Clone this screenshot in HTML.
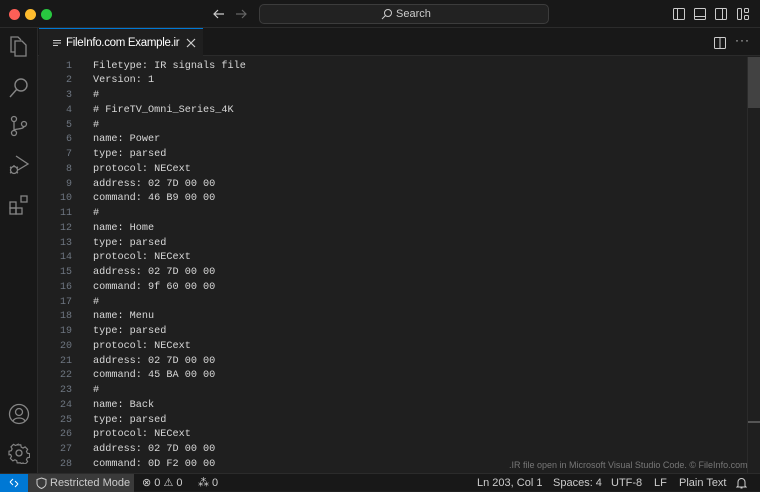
<!DOCTYPE html>
<html><head><meta charset="utf-8"><style>
*{margin:0;padding:0;box-sizing:border-box}
body{width:760px;height:491px;background:#1f1f1f;position:relative;overflow:hidden;font-family:"Liberation Sans",sans-serif;border-radius:10px}
.abs{position:absolute}
#title{left:0;top:0;width:760px;height:28px;background:#181818;border-bottom:1px solid #2b2b2b}
#act{left:0;top:28px;width:38px;height:445px;background:#181818;border-right:1px solid #2b2b2b}
#tabs{left:38px;top:28px;width:722px;height:28px;background:#181818;border-bottom:1px solid #2b2b2b}
#tab{left:39px;top:28px;width:164px;height:29px;background:#1f1f1f;border-top:1px solid #0078d4;color:#fff;font-size:11.5px;letter-spacing:-0.3px;line-height:28px;padding-left:27px}
.ln{position:absolute;left:40px;width:32px;text-align:right;color:#6e7681;font:10px/14.75px "Liberation Mono",monospace}
.cd{position:absolute;left:93px;color:#d8d8d8;font:10.2px/14.75px "Liberation Mono",monospace;white-space:pre}
#status{left:0;top:473px;width:760px;height:18px;background:#181818;border-top:1px solid #2b2b2b;color:#ccc;font-size:11px;line-height:18px}
svg{position:absolute}
</style></head><body>
<div id="title" class="abs"></div>
<div class="abs" style="left:9px;top:9px;width:11px;height:11px;border-radius:50%;background:#fe5f57"></div>
<div class="abs" style="left:25px;top:9px;width:11px;height:11px;border-radius:50%;background:#febc2e"></div>
<div class="abs" style="left:41px;top:9px;width:11px;height:11px;border-radius:50%;background:#28c840"></div>
<svg style="left:212px;top:7px" width="14" height="14" viewBox="0 0 14 14"><path d="M12 7H2M6 3L2 7l4 4" stroke="#ccc" stroke-width="1.2" fill="none"/></svg>
<svg style="left:234px;top:7px" width="14" height="14" viewBox="0 0 14 14"><path d="M2 7h10M8 3l4 4-4 4" stroke="#666" stroke-width="1.2" fill="none"/></svg>
<div class="abs" style="left:259px;top:4px;width:290px;height:20px;border:1px solid #3c3c3c;border-radius:5px;background:#222"></div>
<svg style="left:381px;top:8px" width="12" height="12" viewBox="0 0 12 12"><circle cx="7" cy="5" r="3.5" stroke="#ccc" fill="none"/><path d="M4.5 7.5L1 11" stroke="#ccc"/></svg>
<div class="abs" style="left:396px;top:7px;color:#ccc;font-size:11px;line-height:14px">Search</div>
<svg style="left:672px;top:7px" width="84" height="14" viewBox="0 0 84 14" fill="none" stroke="#ccc"><rect x="1.5" y="1.5" width="11" height="11" rx="1"/><path d="M5.5 1.5v11"/><rect x="22.5" y="1.5" width="11" height="11" rx="1"/><path d="M22.5 9.5h11"/><rect x="43.5" y="1.5" width="11" height="11" rx="1"/><path d="M50.5 1.5v11"/><rect x="65.5" y="1.5" width="4" height="11" rx="1"/><rect x="72.5" y="1.5" width="4" height="4" rx="1"/><rect x="72.5" y="8.5" width="4" height="4" rx="1"/></svg>
<div id="act" class="abs"></div>
<svg style="left:8px;top:36px" width="22" height="22" viewBox="0 0 22 22" fill="none" stroke="#858585" stroke-width="1.3"><path d="M7 5h7l4 4v11H7z"/><path d="M7 16H3V1h7l3 3"/></svg>
<svg style="left:8px;top:77px" width="22" height="22" viewBox="0 0 22 22" fill="none" stroke="#858585" stroke-width="1.4"><circle cx="13" cy="8" r="6"/><path d="M9 12L2 20"/></svg>
<svg style="left:8px;top:115px" width="22" height="22" viewBox="0 0 22 22" fill="none" stroke="#858585" stroke-width="1.3"><circle cx="6" cy="4" r="2.5"/><circle cx="6" cy="18" r="2.5"/><circle cx="16" cy="9" r="2.5"/><path d="M6 6.5v9M16 11.5c0 3-10 2-10 4"/></svg>
<svg style="left:8px;top:155px" width="22" height="22" viewBox="0 0 22 22" fill="none" stroke="#858585" stroke-width="1.3"><path d="M8 1l12 8-10 6"/><circle cx="6" cy="15" r="3.5"/><path d="M2 12l2 1M2 18l2-1M10 12l-2 1M10 18l-2-1M6 11v-1"/></svg>
<svg style="left:8px;top:194px" width="22" height="22" viewBox="0 0 22 22" fill="none" stroke="#858585" stroke-width="1.3"><rect x="2" y="8" width="6" height="6"/><rect x="2" y="14" width="6" height="6"/><rect x="8" y="14" width="6" height="6"/><rect x="13" y="2" width="6" height="6"/></svg>
<svg style="left:8px;top:403px" width="22" height="22" viewBox="0 0 22 22" fill="none" stroke="#858585" stroke-width="1.3"><circle cx="11" cy="11" r="9.5"/><circle cx="11" cy="9" r="3.5"/><path d="M5 18c2-4 10-4 12 0"/></svg>
<svg style="left:8px;top:442px" width="22" height="22" viewBox="0 0 22 22" fill="none" stroke="#858585" stroke-width="1.3"><circle cx="11" cy="11" r="3"/><path d="M9 2h4l.5 2.5 2 1 2.3-1.3 2.8 2.8-1.3 2.3 1 2 2.5.5v4l-2.5.5-1 2 1.3 2.3-2.8 2.8-2.3-1.3-2 1L13 22H9l-.5-2.5-2-1-2.3 1.3-2.8-2.8 1.3-2.3-1-2L-.1 13V9l2.5-.5 1-2L2.1 4.2 4.9 1.4l2.3 1.3 2-1z" transform="scale(.9) translate(1.2 1.2)"/></svg>
<div id="tabs" class="abs"></div>
<div id="tab" class="abs">FileInfo.com Example.ir</div>
<svg style="left:53px;top:39px" width="9" height="9" viewBox="0 0 9 9" stroke="#ccc"><path d="M0 1.5h8M0 4h8M0 6.5h5"/></svg>
<svg style="left:186px;top:38px" width="10" height="10" viewBox="0 0 10 10" stroke="#ccc" stroke-width="1.2"><path d="M1 1l8 8M9 1L1 9"/></svg>
<svg style="left:714px;top:37px" width="12" height="12" viewBox="0 0 12 12" fill="none" stroke="#ccc"><rect x=".5" y=".5" width="11" height="11" rx="1"/><path d="M6 .5v11"/></svg>
<div class="abs" style="left:735px;top:33px;color:#ccc;font-size:12px;letter-spacing:1px">···</div>
<div class="abs" style="left:747px;top:57px;width:13px;height:416px;border-left:1px solid #2b2b2b"></div>
<div class="abs" style="left:748px;top:57px;width:12px;height:51px;background:#424242"></div>
<div class="abs" style="left:748px;top:421px;width:12px;height:2px;background:#555"></div>
<div id="code"></div>
<div class="abs" style="left:509px;top:460px;color:#777;font-size:9px">.IR file open in Microsoft Visual Studio Code. © FileInfo.com</div>
<div id="status" class="abs">
<div class="abs" style="left:0;top:0;width:28px;height:18px;background:#0078d4"></div>
<svg style="left:8px;top:3px" width="12" height="12" viewBox="0 0 12 12" stroke="#fff" fill="none"><path d="M2 5l3-3M2 5l3 3M10 7l-3-3M10 7l-3 3"/></svg>
<div class="abs" style="left:28px;top:0;width:106px;height:18px;background:#3a3a3a;padding-left:22px">Restricted Mode</div>
<svg style="left:36px;top:3px" width="11" height="12" viewBox="0 0 11 12" fill="none" stroke="#ccc"><path d="M5.5 1L10 2.5v4c0 2.5-2 4-4.5 5C3 10.5 1 9 1 6.5v-4z"/></svg>
<div class="abs" style="left:142px;top:0">⊗ 0 ⚠ 0</div>
<div class="abs" style="left:198px;top:0">⁂ 0</div>
<div class="abs" style="left:477px;top:0">Ln 203, Col 1</div>
<div class="abs" style="left:553px;top:0">Spaces: 4</div>
<div class="abs" style="left:611px;top:0">UTF-8</div>
<div class="abs" style="left:654px;top:0">LF</div>
<div class="abs" style="left:679px;top:0">Plain Text</div>
<svg style="left:736px;top:3px" width="11" height="12" viewBox="0 0 11 12" fill="none" stroke="#ccc"><path d="M2 9V5a3.5 3.5 0 017 0v4l1 1H1zM4.5 11h2"/></svg>
</div>
<script>
var L=["Filetype: IR signals file","Version: 1","#","# FireTV_Omni_Series_4K","#","name: Power","type: parsed","protocol: NECext","address: 02 7D 00 00","command: 46 B9 00 00","#","name: Home","type: parsed","protocol: NECext","address: 02 7D 00 00","command: 9f 60 00 00","#","name: Menu","type: parsed","protocol: NECext","address: 02 7D 00 00","command: 45 BA 00 00","#","name: Back","type: parsed","protocol: NECext","address: 02 7D 00 00","command: 0D F2 00 00"];
var h="";for(var i=0;i<L.length;i++){var t=59.5+i*14.75;h+='<div class="ln" style="top:'+t+'px">'+(i+1)+'</div><div class="cd" style="top:'+t+'px">'+L[i]+'</div>';}
document.getElementById("code").innerHTML=h;
</script>
</body></html>
